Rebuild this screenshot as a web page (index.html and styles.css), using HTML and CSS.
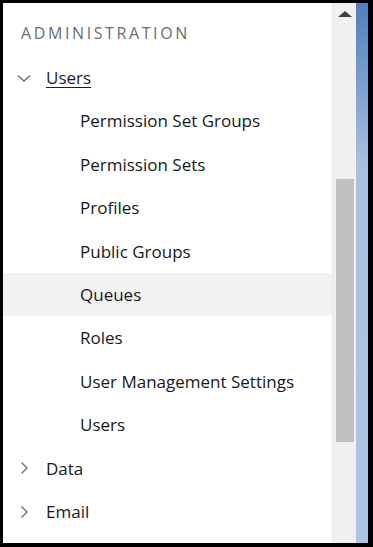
FILE: index.html
```html
<!DOCTYPE html>
<html lang="en">
<head>
    <meta charset="UTF-8">
    <meta name="viewport" content="width=device-width, initial-scale=1.0">
    <title>Setup Menu</title>
    <link rel="stylesheet" href="styles.css">
</head>
<body>
    <div class="frame">
        <nav class="setup-nav">
            <h2 class="section-title">ADMINISTRATION</h2>
            <ul class="tree">
                <li class="tree-item">
                    <div class="tree-row">
                        <svg class="chevron" viewBox="0 0 14 14" width="14" height="14"><path d="M1 4.5 L7 10 L13 4.5" /></svg>
                        <a href="#" class="tree-link open">Users</a>
                    </div>
                    <ul class="subtree">
                        <li class="sub-row">Permission Set Groups</li>
                        <li class="sub-row">Permission Sets</li>
                        <li class="sub-row">Profiles</li>
                        <li class="sub-row">Public Groups</li>
                        <li class="sub-row selected">Queues</li>
                        <li class="sub-row">Roles</li>
                        <li class="sub-row">User Management Settings</li>
                        <li class="sub-row">Users</li>
                    </ul>
                </li>
                <li class="tree-item">
                    <div class="tree-row">
                        <svg class="chevron" viewBox="0 0 14 14" width="14" height="14"><path d="M4.5 1.5 L10 7 L4.5 12.5" /></svg>
                        <span class="tree-link">Data</span>
                    </div>
                </li>
                <li class="tree-item">
                    <div class="tree-row">
                        <svg class="chevron" viewBox="0 0 14 14" width="14" height="14"><path d="M4.5 1.5 L10 7 L4.5 12.5" /></svg>
                        <span class="tree-link">Email</span>
                    </div>
                </li>
            </ul>
        </nav>
        <div class="scrollbar">
            <div class="arrow-up"></div>
            <div class="thumb"></div>
        </div>
        <div class="backdrop"></div>
    </div>
</body>
</html>
```

FILE: styles.css
```css
body, h2, ul, li {
    margin: 0;
    padding: 0;
}

body {
    background-color: #000000;
    font-family: "Open Sans", Arial, sans-serif;
    height: 547px;
    overflow: hidden;
}

.frame {
    display: flex;
    margin: 3px 5px 4px 3px;
    height: 540px;
    background-color: #ffffff;
}

.setup-nav {
    flex: 1;
    padding-top: 19px;
    overflow: hidden;
}

.section-title {
    font-size: 16px;
    font-weight: normal;
    letter-spacing: 2.6px;
    color: #6b6d70;
    padding-left: 18px;
    height: 22px;
    line-height: 22px;
    margin-bottom: 12px;
}

.tree {
    list-style: none;
}

.tree-row {
    display: flex;
    align-items: center;
    height: 43.4px;
}

.chevron {
    fill: none;
    stroke: #706e6b;
    stroke-width: 1.4;
    margin-left: 14px;
    margin-right: 15px;
}

.tree-link {
    font-size: 17px;
    color: #181818;
    text-decoration: none;
}

.tree-link.open {
    text-decoration: underline;
    text-underline-offset: 3px;
    color: #1c1a3a;
}

.subtree {
    list-style: none;
}

.sub-row {
    height: 43.4px;
    line-height: 43.4px;
    padding-left: 77px;
    font-size: 17px;
    color: #181818;
}

.sub-row.selected {
    background-color: #f3f2f2;
}

.scrollbar {
    width: 23px;
    background-color: #f0f0f0;
    border-left: 1px solid #e8e8e8;
    padding-top: 176px;
    position: relative;
}

.arrow-up {
    position: absolute;
    top: 8px;
    left: 5px;
    width: 0;
    height: 0;
    border-left: 7px solid transparent;
    border-right: 7px solid transparent;
    border-bottom: 6px solid #404040;
}

.thumb {
    margin-left: 3px;
    width: 18px;
    height: 263px;
    background-color: #c1c1c1;
}

.backdrop {
    width: 12px;
    background: linear-gradient(to bottom, #4f7fbd 0%, #7aa0d0 15%, #a9c0e2 30%, #afc4e3 100%);
}
```
